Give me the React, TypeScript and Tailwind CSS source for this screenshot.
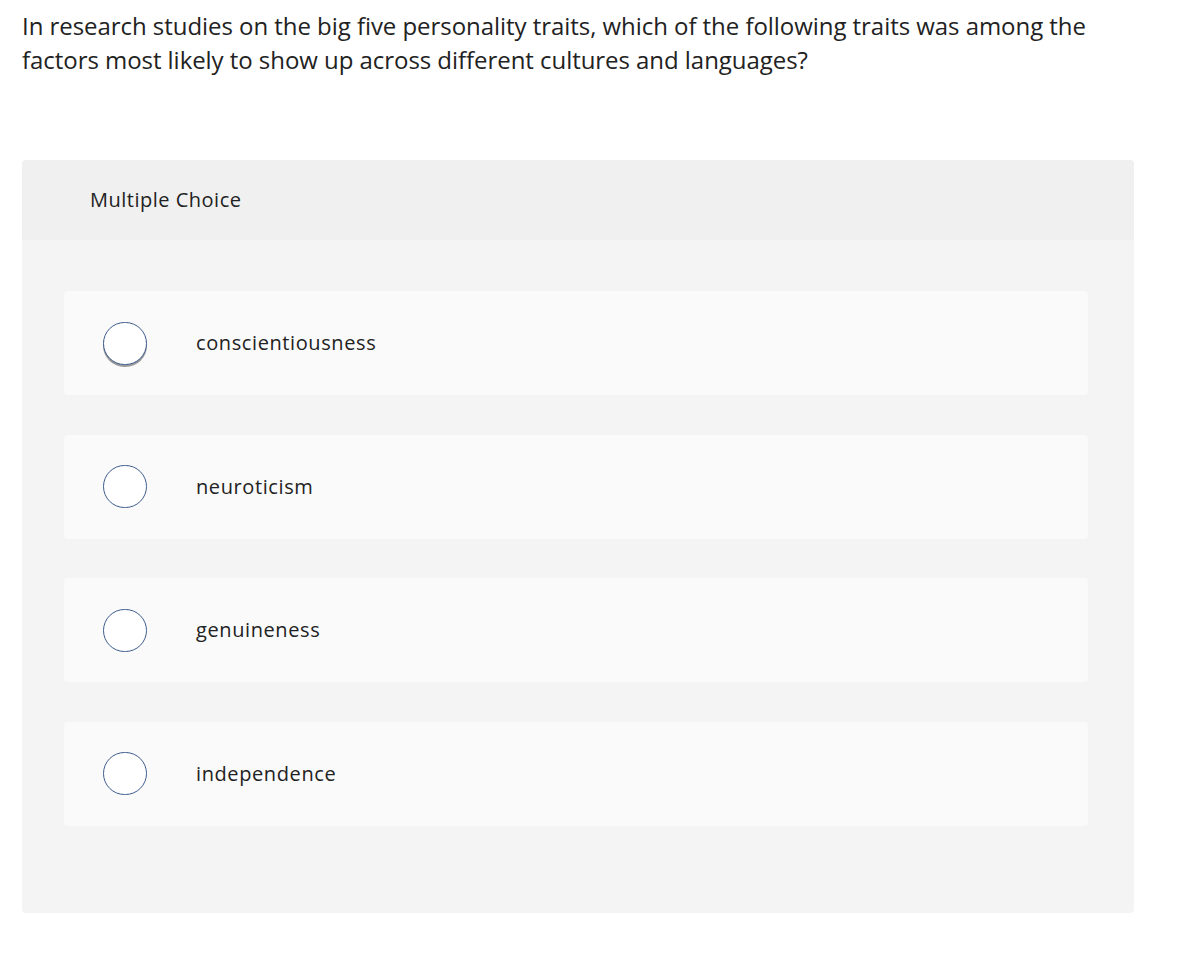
import React from 'react';

const options = ['conscientiousness', 'neuroticism', 'genuineness', 'independence'];

function Radio({ raised }: { raised?: boolean }) {
  return (
    <span
      className={
        'block w-[44px] h-[43px] shrink-0 rounded-full border-[1.5px] border-[#3d5c8c] bg-white' +
        (raised ? ' shadow-[0_2px_0_#9a9a9a]' : '')
      }
    />
  );
}

export default function App() {
  return (
    <div className="min-h-screen bg-white px-[22px] pt-[9px] text-[#222]" style={{ fontFamily: '"Open Sans", "Liberation Sans", sans-serif' }}>
      {/* Question */}
      <p className="w-[1112px] text-[24px] leading-[34px] tracking-[-0.05px]">
        In research studies on the big five personality traits, which of the following traits was among the
        factors most likely to show up across different cultures and languages?
      </p>

      {/* Answer panel */}
      <div className="mt-[83px] w-[1112px] rounded-[4px] overflow-hidden bg-[#f4f4f4]">
        <div className="h-[80px] flex items-center pl-[68px] bg-[#f0f0f0] text-[20px] tracking-[0.5px]">Multiple Choice</div>
        <div className="flex flex-col gap-[39.5px] pl-[42px] pr-[46px] pt-[51px] pb-[87px]">
          {options.map((o, i) => (
            <label key={o} className="flex h-[104px] items-center rounded-[4px] bg-[#fafafa] pl-[39px] cursor-pointer">
              <Radio raised={i === 0} />
              <span className="ml-[49px] text-[20px] tracking-[0.6px]">{o}</span>
            </label>
          ))}
        </div>
      </div>
    </div>
  );
}
